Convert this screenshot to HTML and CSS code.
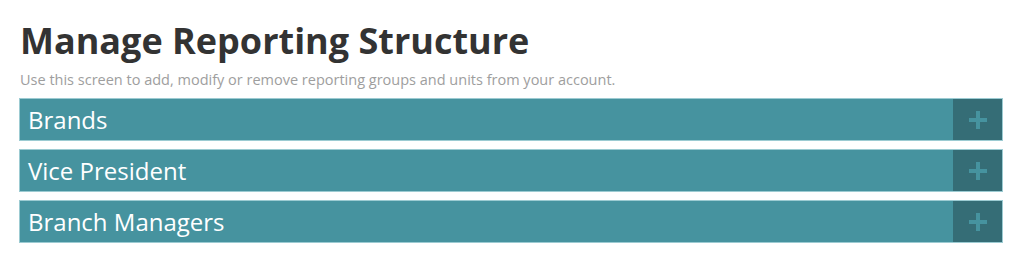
FILE: index.html
```html
<!DOCTYPE html>
<html>
<head>
<meta charset="utf-8">
<link rel="stylesheet" href="styles.css">
</head>
<body>
<div class="page">
  <h1 class="title">Manage Reporting Structure</h1>
  <p class="subtitle">Use this screen to add, modify or remove reporting groups and units from your account.</p>
  <div class="groups">
    <div class="group">
      <span class="group-name">Brands</span>
      <button class="add-btn" aria-label="Add"><span class="plus"></span></button>
    </div>
    <div class="group">
      <span class="group-name">Vice President</span>
      <button class="add-btn" aria-label="Add"><span class="plus"></span></button>
    </div>
    <div class="group">
      <span class="group-name">Branch Managers</span>
      <button class="add-btn" aria-label="Add"><span class="plus"></span></button>
    </div>
  </div>
</div>
</body>
</html>
```

FILE: styles.css
```css
html, body {
  margin: 0;
  padding: 0;
  background: #ffffff;
  font-family: "Open Sans", "Liberation Sans", sans-serif;
}
.page {
  padding: 19px 21px 0 19px;
}
.title {
  margin: 0 0 0 1px;
  font-size: 36px;
  font-weight: 700;
  line-height: 44px;
  color: #333333;
}
.subtitle {
  margin: 7px 0 0 1px;
  font-size: 14.5px;
  line-height: 19px;
  color: #9e9e9e;
}
.groups {
  margin-top: 9px;
  display: flex;
  flex-direction: column;
  gap: 8px;
}
.group {
  display: flex;
  align-items: stretch;
  height: 43px;
  box-sizing: border-box;
  background: #46939f;
  border: 1px solid #9ccbd2;
}
.group-name {
  flex: 1;
  display: flex;
  align-items: center;
  padding-left: 8px;
  font-size: 24px;
  color: #ffffff;
}
.add-btn {
  width: 49px;
  border: 0;
  padding: 0;
  margin: 0;
  background: #356d76;
  display: flex;
  align-items: center;
  justify-content: center;
}
.plus {
  position: relative;
  width: 18px;
  height: 18px;
  display: block;
}
.plus::before, .plus::after {
  content: "";
  position: absolute;
  background: #46939f;
}
.plus::before {
  left: 0;
  right: 0;
  top: 7px;
  height: 4px;
}
.plus::after {
  top: 0;
  bottom: 0;
  left: 7px;
  width: 4px;
}
```
